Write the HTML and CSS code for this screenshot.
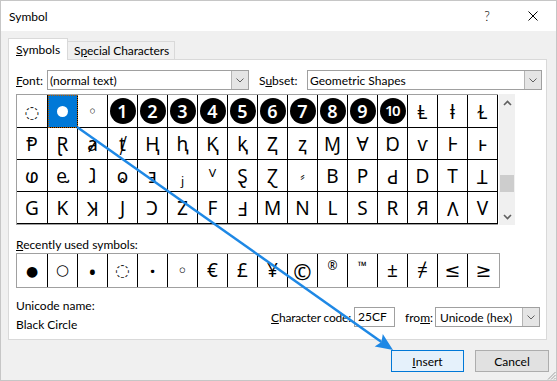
FILE: index.html
```html
<!DOCTYPE html>
<html>
<head>
<meta charset="utf-8">
<link rel="stylesheet" href="styles.css">
</head>
<body>
<div class="window">
  <div class="titlebar">
    <span class="title">Symbol</span>
    <span class="tbtn help">?</span>
    <span class="tbtn close"><svg width="10" height="10" viewBox="0 0 10 10"><path d="M0.5 0.5 L9.5 9.5 M9.5 0.5 L0.5 9.5" stroke="#000" stroke-width="1" fill="none"/></svg></span>
  </div>
  <div class="main">
    <div class="tabs">
      <div class="tab active"><u>S</u>ymbols</div>
      <div class="tab">S<u>p</u>ecial Characters</div>
    </div>
    <div class="panel">
      <div class="select-row">
        <span class="lbl font-lbl"><u>F</u>ont:</span>
        <div class="select font-select"><span class="val">(normal text)</span><span class="drop"><svg width="8" height="5" viewBox="0 0 8 5"><path d="M0.5 0.5 L4 4 L7.5 0.5" stroke="#606060" fill="none"/></svg></span></div>
        <span class="lbl subset-lbl">S<u>u</u>bset:</span>
        <div class="select subset-select"><span class="val">Geometric Shapes</span><span class="drop"><svg width="8" height="5" viewBox="0 0 8 5"><path d="M0.5 0.5 L4 4 L7.5 0.5" stroke="#606060" fill="none"/></svg></span></div>
      </div>
      <div class="grid-wrap">
        <div class="grid">
          <div class="c"><span class="g-dotc">◌</span></div>
          <div class="c sel"><span class="g-sel"></span></div>
          <div class="c"><span class="g-wb">◦</span></div>
          <div class="c"><span class="num">1</span></div>
          <div class="c"><span class="num">2</span></div>
          <div class="c"><span class="num">3</span></div>
          <div class="c"><span class="num">4</span></div>
          <div class="c"><span class="num">5</span></div>
          <div class="c"><span class="num">6</span></div>
          <div class="c"><span class="num">7</span></div>
          <div class="c"><span class="num">8</span></div>
          <div class="c"><span class="num">9</span></div>
          <div class="c"><span class="num ten">10</span></div>
          <div class="c">Ⱡ</div>
          <div class="c">ⱡ</div>
          <div class="c">Ɫ</div>

          <div class="c">Ᵽ</div>
          <div class="c">Ɽ</div>
          <div class="c">ⱥ</div>
          <div class="c">ⱦ</div>
          <div class="c">Ⱨ</div>
          <div class="c">ⱨ</div>
          <div class="c">Ⱪ</div>
          <div class="c">ⱪ</div>
          <div class="c">Ⱬ</div>
          <div class="c">ⱬ</div>
          <div class="c">Ɱ</div>
          <div class="c">Ɐ</div>
          <div class="c">Ɒ</div>
          <div class="c">ⱱ</div>
          <div class="c">Ⱶ</div>
          <div class="c">ⱶ</div>

          <div class="c">ⱷ</div>
          <div class="c">ⱸ</div>
          <div class="c">ⱹ</div>
          <div class="c">ⱺ</div>
          <div class="c">ⱻ</div>
          <div class="c">ⱼ</div>
          <div class="c">ⱽ</div>
          <div class="c">Ȿ</div>
          <div class="c">Ɀ</div>
          <div class="c"><span class="g-tiny">⸗</span></div>
          <div class="c">B</div>
          <div class="c">P</div>
          <div class="c"><span class="rot">P</span></div>
          <div class="c">D</div>
          <div class="c">T</div>
          <div class="c"><span class="rot">T</span></div>

          <div class="c">G</div>
          <div class="c">K</div>
          <div class="c"><span class="rot">K</span></div>
          <div class="c">J</div>
          <div class="c"><span class="flip">C</span></div>
          <div class="c">Z</div>
          <div class="c">F</div>
          <div class="c"><span class="rot">F</span></div>
          <div class="c">M</div>
          <div class="c">N</div>
          <div class="c">L</div>
          <div class="c">S</div>
          <div class="c">R</div>
          <div class="c"><span class="flip">R</span></div>
          <div class="c"><span class="rot">V</span></div>
          <div class="c">V</div>
        </div>
        <div class="scrollbar">
          <span class="sb-btn"><svg width="9" height="6" viewBox="0 0 9 6"><path d="M1 5 L4.5 1.5 L8 5" stroke="#606060" stroke-width="1.6" fill="none"/></svg></span>
          <span class="sb-track"><span class="sb-thumb"></span></span>
          <span class="sb-btn"><svg width="9" height="6" viewBox="0 0 9 6"><path d="M1 1 L4.5 4.5 L8 1" stroke="#606060" stroke-width="1.6" fill="none"/></svg></span>
        </div>
      </div>
      <div class="recent-lbl"><u>R</u>ecently used symbols:</div>
      <div class="recent">
        <div class="rc first"><span class="r-black">●</span></div>
        <div class="rc"><span class="r-white">○</span></div>
        <div class="rc"><span class="r-bullet">•</span></div>
        <div class="rc"><span class="r-dotc">◌</span></div>
        <div class="rc"><span class="r-mid">·</span></div>
        <div class="rc"><span class="r-wb">◦</span></div>
        <div class="rc">€</div>
        <div class="rc">£</div>
        <div class="rc">¥</div>
        <div class="rc"><span class="r-copy">©</span></div>
        <div class="rc"><span class="r-sup">®</span></div>
        <div class="rc"><span class="r-tm">™</span></div>
        <div class="rc">±</div>
        <div class="rc">≠</div>
        <div class="rc">≤</div>
        <div class="rc last">≥</div>
      </div>
      <div class="info">
        <div class="info-name">
          <div class="line">Unicode name:</div>
          <div class="line">Black Circle</div>
        </div>
        <div class="info-code">
          <span class="lbl code-lbl"><u>C</u>haracter code:</span>
          <div class="input">25CF</div>
          <span class="lbl from-lbl">fro<u>m</u>:</span>
          <div class="select from-select"><span class="val">Unicode (hex)</span><span class="drop"><svg width="8" height="5" viewBox="0 0 8 5"><path d="M0.5 0.5 L4 4 L7.5 0.5" stroke="#606060" fill="none"/></svg></span></div>
        </div>
      </div>
    </div>
    <div class="buttons">
      <div class="btn primary"><u>I</u>nsert</div>
      <div class="btn">Cancel</div>
    </div>
  </div>
  <svg class="grip" width="9" height="9" viewBox="0 0 9 9"><path d="M8.5 1 L1 8.5 M8.5 4 L4 8.5 M8.5 7 L7 8.5" stroke="#a0a0a0" stroke-width="1" fill="none"/></svg>
  <svg class="arrow" width="557" height="381" viewBox="0 0 557 381">
    <line x1="77" y1="127" x2="381.5" y2="341.9" stroke="#1e88e5" stroke-width="2.5"/>
    <polygon points="393,350 374.7,346.4 381.5,341.9 382.8,334.1" fill="#1e88e5"/>
  </svg>
</div>
</body>
</html>
```
FILE: styles.css
```css
* { box-sizing: border-box; }
html, body { margin: 0; padding: 0; }
body {
  width: 557px;
  height: 381px;
  overflow: hidden;
  font-family: "Lato", "Liberation Sans", sans-serif;
  font-size: 12px;
  color: #000;
  background: #f0f0f0;
}
u { text-decoration: underline; text-underline-offset: 1px; }

.window {
  position: relative;
  width: 557px;
  height: 381px;
  background: #f0f0f0;
  border: 1px solid #c6c6c6;
}

.titlebar {
  height: 30px;
  background: #fff;
  display: flex;
  align-items: center;
  padding-left: 8px;
}
.title { flex: 1; font-size: 12px; }
.tbtn {
  width: 46px;
  height: 30px;
  display: flex;
  align-items: center;
  justify-content: center;
}
.help { font-size: 13px; font-weight: 300; }

.main { padding: 7px 7px 0 7px; }

.tabs { display: flex; height: 21px; align-items: flex-start; }
.tab {
  height: 18px;
  margin-top: 3px;
  padding: 0 6px;
  display: flex;
  align-items: center;
  white-space: nowrap;
  background: #f0f0f0;
  border-top: 1px solid #d9d9d9;
  border-right: 1px solid #d9d9d9;
  width: 107px;
  letter-spacing: -0.1px;
}
.tab.active {
  width: 60px;
  height: 22px;
  margin-top: 0;
  padding: 0 7px;
  letter-spacing: 0;
  background: #fff;
  border-left: 1px solid #d9d9d9;
  position: relative;
  z-index: 1;
}

.panel {
  margin-right: 2px;
  height: 281px;
  background: #fff;
  border: 1px solid #d9d9d9;
  padding: 10px 0 0 7px;
}

.select-row { display: flex; align-items: center; height: 20px; }
.lbl { white-space: nowrap; }
.font-lbl { width: 31px; }
.subset-lbl { width: 48px; margin-left: 10px; }
.select {
  height: 20px;
  border: 1px solid #a0a0a0;
  display: flex;
  align-items: center;
  background: #fff;
}
.select .val { flex: 1; padding-left: 2px; white-space: nowrap; }
.select .drop {
  width: 17px;
  height: 18px;
  background: #e5e5e5;
  border-left: 1px solid #b5b5b5;
  display: flex;
  align-items: center;
  justify-content: center;
}
.font-select { width: 202px; }
.subset-select { width: 235px; }

.grid-wrap { display: flex; margin-top: 4px; height: 131px; }
.grid {
  display: grid;
  grid-template-columns: 31px repeat(15, 30px);
  grid-template-rows: 33px 32px 32px 32px;
  border-top: 1px solid #a0a0a0;
  border-left: 1px solid #a0a0a0;
  border-bottom: 1px solid #a0a0a0;
  font-family: "Noto Sans", "DejaVu Sans", sans-serif;
  font-size: 19px;
}
.c {
  border-right: 1px solid #000;
  border-bottom: 1px solid #000;
  display: flex;
  align-items: center;
  justify-content: center;
  line-height: 1;
  padding-top: 2px;
}
.c.sel {
  background: #0078d7;
  outline: 1px dotted #b05a00;
  outline-offset: -1px;
  padding-top: 0;
}
.g-sel {
  width: 11px;
  height: 11px;
  border-radius: 50%;
  background: #fff;
}
.g-dotc { font-family: "DejaVu Sans", sans-serif; font-size: 17px; color: #222; }
.g-wb { font-family: "DejaVu Sans", sans-serif; font-size: 16px; }
.g-tiny { font-size: 12px; }
.num {
  width: 26px;
  height: 26px;
  border-radius: 50%;
  background: #000;
  color: #fff;
  display: flex;
  align-items: center;
  justify-content: center;
  font-family: "Noto Sans", sans-serif;
  font-weight: 600;
  font-size: 18px;
  margin-top: -3px;
}
.num.ten { font-size: 15px; letter-spacing: -1.5px; padding-right: 1px; }
.rot { display: inline-block; transform: rotate(180deg); }
.flip { display: inline-block; transform: scaleX(-1); }

.scrollbar {
  width: 16px;
  margin-left: 1px;
  background: #f0f0f0;
  display: flex;
  flex-direction: column;
}
.sb-btn {
  height: 17px;
  display: flex;
  align-items: center;
  justify-content: center;
}
.sb-track { flex: 1; position: relative; }
.sb-thumb {
  position: absolute;
  left: 1px;
  right: 1px;
  top: 64px;
  height: 17px;
  background: #cdcdcd;
}

.recent-lbl { margin-top: 12px; height: 16px; line-height: 16px; }
.recent {
  display: flex;
  width: 484px;
  height: 35px;
  border: 1px solid #a0a0a0;
  font-family: "Noto Sans", "DejaVu Sans", sans-serif;
  font-size: 19px;
}
.rc {
  width: 30px;
  border-right: 1px solid #000;
  display: flex;
  align-items: center;
  justify-content: center;
  line-height: 1;
}
.rc.first { width: 31px; }
.rc.last { flex: 1; border-right: none; }
.r-black { font-family: "DejaVu Sans", sans-serif; font-size: 14px; }
.r-white { font-family: "DejaVu Sans", sans-serif; font-size: 15px; }
.r-bullet { font-size: 22px; }
.r-dotc { font-family: "DejaVu Sans", sans-serif; font-size: 17px; color: #222; }
.r-wb { font-family: "DejaVu Sans", sans-serif; font-size: 18px; }
.r-mid { font-size: 20px; font-weight: bold; }
.r-copy { font-size: 22px; }
.r-sup { font-size: 12px; margin-top: -10px; }
.r-tm { font-size: 12px; font-weight: bold; margin-top: -10px; }

.info { display: flex; margin-top: 8px; padding-right: 6px; }
.info-name { flex: 1; }
.info-name .line { height: 19px; line-height: 19px; }
.info-code { display: flex; align-items: center; margin-top: 11px; height: 20px; }
.code-lbl { margin-right: 3px; letter-spacing: -0.2px; }
.input {
  width: 41px;
  height: 20px;
  border: 1px solid #a0a0a0;
  padding-left: 3px;
  line-height: 18px;
}
.from-lbl { margin-left: 10px; width: 30px; }
.from-select { width: 105px; }
.from-select .val { padding-left: 4px; }

.buttons {
  display: flex;
  justify-content: flex-end;
  gap: 11px;
  margin-top: 10px;
}
.btn {
  width: 74px;
  height: 22px;
  border: 1px solid #adadad;
  background: #e1e1e1;
  display: flex;
  align-items: center;
  justify-content: center;
}
.btn.primary {
  width: 73px;
  border-color: #0078d7;
  background: #e5f1fb;
}

.grip { position: absolute; right: 0; bottom: 0; }
.arrow { position: absolute; left: -1px; top: -1px; pointer-events: none; }
```
